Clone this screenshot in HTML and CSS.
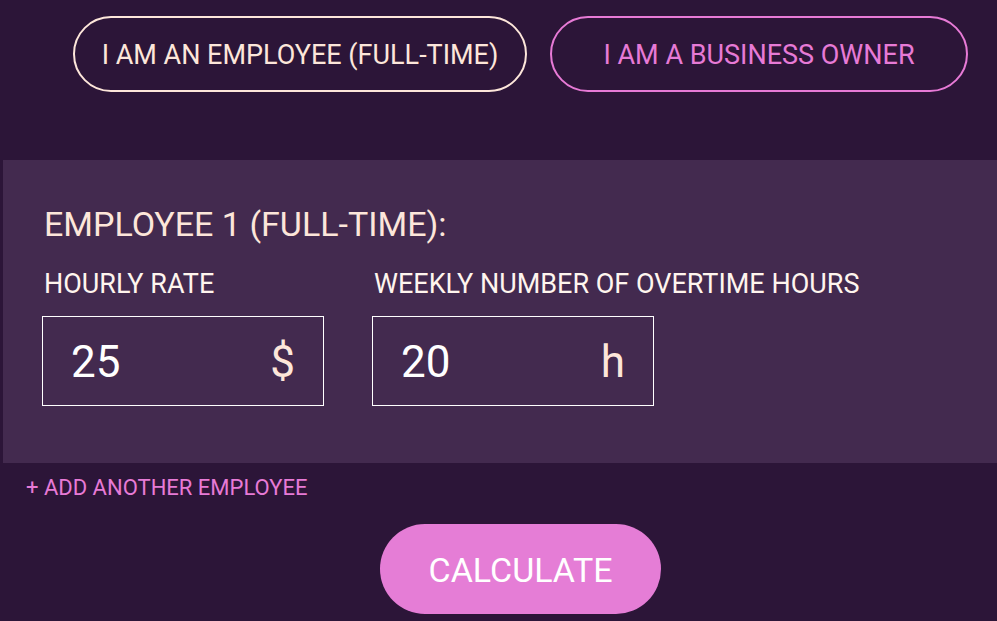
FILE: index.html
```html
<!DOCTYPE html>
<html lang="en">
<head>
    <meta charset="UTF-8">
    <meta name="viewport" content="width=device-width, initial-scale=1.0">
    <title>Overtime Calculator</title>
    <link rel="stylesheet" href="styles.css">
</head>
<body>
    <div class="role-switch">
        <button class="role-btn role-btn--active">I am an employee (full-time)</button>
        <button class="role-btn role-btn--owner">I am a business owner</button>
    </div>

    <section class="employee-card">
        <h2 class="employee-title">Employee 1 (full-time):</h2>
        <div class="fields">
            <div class="field">
                <label class="field-label">Hourly rate</label>
                <div class="field-box">
                    <span class="field-value">25</span>
                    <span class="field-unit">$</span>
                </div>
            </div>
            <div class="field">
                <label class="field-label">Weekly number of overtime hours</label>
                <div class="field-box">
                    <span class="field-value">20</span>
                    <span class="field-unit">h</span>
                </div>
            </div>
        </div>
    </section>

    <a class="add-link" href="#">+ Add another employee</a>

    <div class="calc-row">
        <button class="calc-btn">Calculate</button>
    </div>
</body>
</html>
```

FILE: styles.css
```css
body {
    margin: 0;
    background: #2c1538;
    font-family: Roboto, "Liberation Sans", sans-serif;
    color: #fde6da;
    width: 997px;
    height: 621px;
    overflow: hidden;
}

.role-switch {
    display: flex;
    gap: 23px;
    padding: 16px 0 0 73px;
}

.role-btn {
    height: 76px;
    border-radius: 38px;
    background: transparent;
    font-family: inherit;
    text-transform: uppercase;
    font-size: 27px;
    padding: 2px 0 0;
    cursor: pointer;
}

.role-btn--active {
    width: 454px;
    border: 2px solid #fde6da;
    color: #fde6da;
}

.role-btn--owner {
    width: 418px;
    border: 2px solid #e77ad6;
    color: #e77ad6;
}

.employee-card {
    margin: 68px 0 0 3px;
    height: 303px;
    background: #432a4f;
    padding: 0 0 0 41px;
    box-sizing: border-box;
    overflow: hidden;
}

.employee-title {
    margin: 0;
    padding-top: 44px;
    font-weight: 400;
    font-size: 34px;
    line-height: 40px;
    text-transform: uppercase;
}

.fields {
    display: flex;
    gap: 50px;
    margin-top: 25px;
}

.field-label {
    display: block;
    font-size: 27px;
    line-height: 30px;
    color: #fff5ee;
    text-transform: uppercase;
}

.field-box {
    margin-top: 17px;
    margin-left: -2px;
    width: 282px;
    height: 90px;
    box-sizing: border-box;
    border: 1px solid #ffffff;
    display: flex;
    align-items: center;
    justify-content: space-between;
    padding: 2px 28px 0 28px;
    font-size: 44px;
}

.field-value {
    color: #ffffff;
}

.field-unit {
    color: #fde6da;
}

.add-link {
    display: inline-block;
    margin: 12px 0 0 26px;
    font-size: 22px;
    color: #e77ad6;
    text-decoration: none;
    text-transform: uppercase;
}

.calc-row {
    display: flex;
    padding: 24px 0 0 380px;
}

.calc-btn {
    width: 281px;
    height: 90px;
    border: none;
    border-radius: 45px;
    background: #e57dd6;
    color: #ffffff;
    font-family: inherit;
    text-transform: uppercase;
    font-size: 34px;
    padding: 2px 0 0;
}
```
